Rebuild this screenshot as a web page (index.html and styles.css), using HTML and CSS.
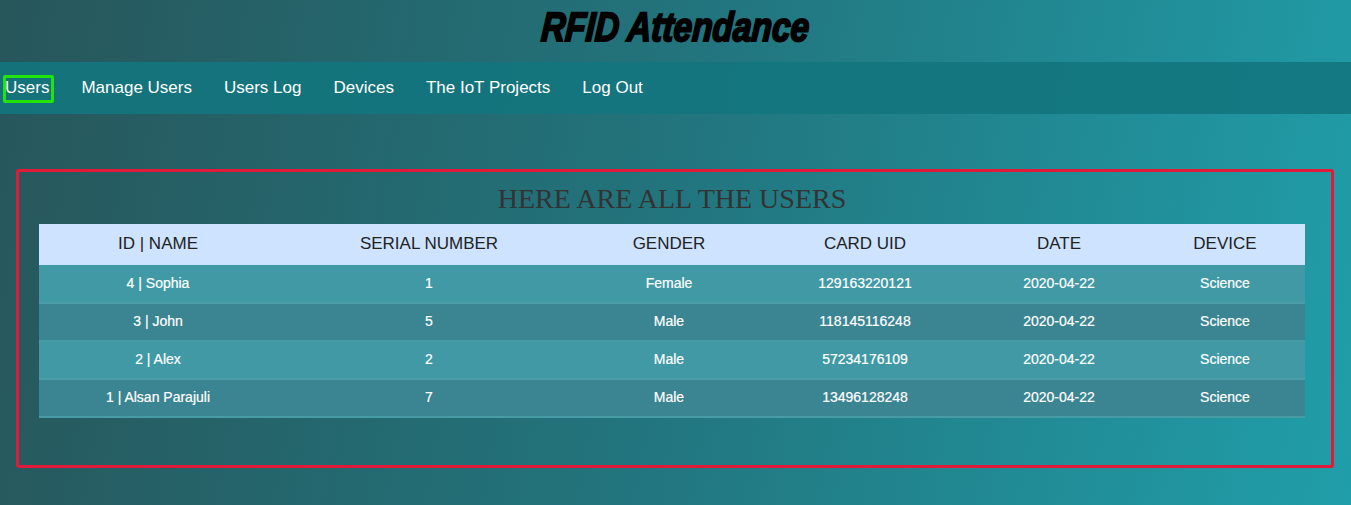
FILE: index.html
```html
<!DOCTYPE html>
<html lang="en">
<head>
<meta charset="utf-8">
<title>RFID Attendance</title>
<link rel="stylesheet" href="styles.css">
</head>
<body>
<header class="site-header"><h1 class="brand">RFID Attendance</h1></header>
<nav class="topnav">
  <a class="nav-link active" href="#">Users</a>
  <a class="nav-link" href="#">Manage Users</a>
  <a class="nav-link" href="#">Users Log</a>
  <a class="nav-link" href="#">Devices</a>
  <a class="nav-link" href="#">The IoT Projects</a>
  <a class="nav-link" href="#">Log Out</a>
</nav>
<main class="panel">
  <h2 class="panel-title">HERE ARE ALL THE USERS</h2>
  <table class="users">
    <colgroup>
      <col class="c1"><col class="c2"><col class="c3"><col class="c4"><col class="c5"><col class="c6">
    </colgroup>
    <thead>
      <tr><th>ID | NAME</th><th>SERIAL NUMBER</th><th>GENDER</th><th>CARD UID</th><th>DATE</th><th>DEVICE</th></tr>
    </thead>
    <tbody>
      <tr><td>4 | Sophia</td><td>1</td><td>Female</td><td>129163220121</td><td>2020-04-22</td><td>Science</td></tr>
      <tr><td>3 | John</td><td>5</td><td>Male</td><td>118145116248</td><td>2020-04-22</td><td>Science</td></tr>
      <tr><td>2 | Alex</td><td>2</td><td>Male</td><td>57234176109</td><td>2020-04-22</td><td>Science</td></tr>
      <tr><td>1 | Alsan Parajuli</td><td>7</td><td>Male</td><td>13496128248</td><td>2020-04-22</td><td>Science</td></tr>
    </tbody>
  </table>
</main>
</body>
</html>
```
FILE: styles.css
```css
html, body { margin: 0; padding: 0; height: 100%; }
body {
  background: linear-gradient(100deg, #27565a 0%, #22757e 50%, #209ea9 100%);
  font-family: "Liberation Sans", Arial, sans-serif;
  overflow: hidden;
}
.site-header { height: 62px; display: flex; justify-content: center; }
.brand {
  margin: 7px 0 0;
  height: 40px;
  line-height: 40px;
  font-family: "Liberation Sans", sans-serif;
  font-size: 41px;
  font-style: italic;
  font-weight: 700;
  color: #000;
  -webkit-text-stroke: 2px #000;
  transform: skewX(-4deg) scaleX(0.815);
  white-space: nowrap;
}
.topnav {
  height: 52px;
  background: rgba(19, 117, 126, 0.9);
  display: flex;
  align-items: center;
  gap: 25px;
  padding-left: 3px;
}
.nav-link {
  color: #fff;
  font-size: 17px;
  text-decoration: none;
  border: 2px solid transparent;
  padding: 0 3px 2px 0;
  margin-top: 2px;
  line-height: 22px;
}
.nav-link.active { border-color: #22e30c; box-shadow: inset 0 0 0 1px #22e30c; border-radius: 2px; }
.panel {
  margin: 55px 17px 0 16px;
  height: 299px;
  box-sizing: border-box;
  border: 3px solid #e01a38;
  border-radius: 3px;
  padding: 13px 20px 0;
}
.panel-title {
  margin: 0;
  height: 39px;
  line-height: 28px;
  padding-right: 6px;
  box-sizing: border-box;
  text-align: center;
  font-family: "Liberation Serif", "Times New Roman", serif;
  font-weight: 400;
  font-size: 28px;
  color: #333;
}
.users { width: 1266px; border-collapse: collapse; table-layout: fixed; }
.c1 { width: 238px; } .c2 { width: 304px; } .c3 { width: 176px; }
.c4 { width: 216px; } .c5 { width: 172px; } .c6 { width: 160px; }
.users th {
  height: 41px;
  padding: 0 0 2px;
  background: #cde3ff;
  color: #222;
  font-weight: 400;
  font-size: 17px;
  text-align: center;
  box-sizing: border-box;
}
.users td {
  height: 38px;
  padding: 0 0 2px;
  box-sizing: border-box;
  color: #fff;
  font-size: 14px;
  -webkit-text-stroke: 0.2px #fff;
  text-align: center;
  border-bottom: 2px solid #4d9da8;
}
.users tbody tr:nth-child(odd) { background: #4099a5; }
.users tbody tr:nth-child(even) { background: #3b8491; }
.users tbody tr:nth-child(even) td { border-bottom-color: #469ba5; }
```
